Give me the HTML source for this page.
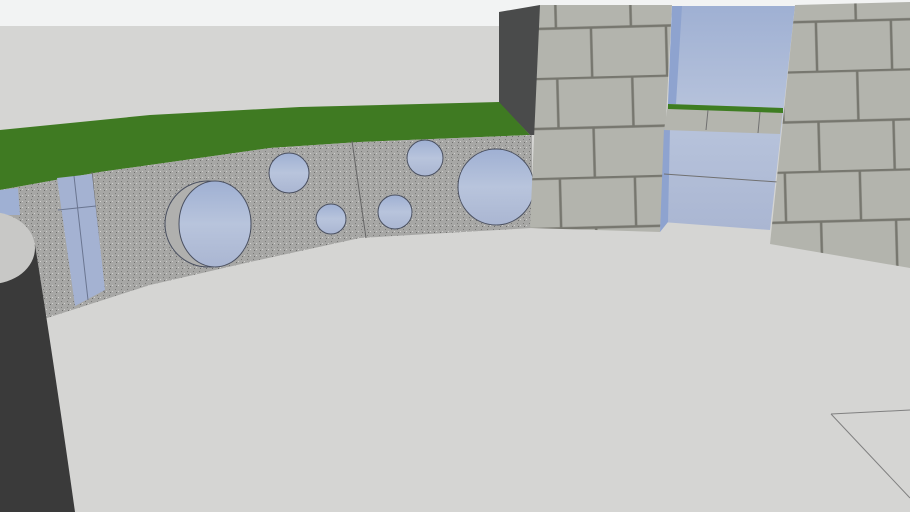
<!DOCTYPE html>
<html><head><meta charset="utf-8"><style>html,body{margin:0;padding:0;width:910px;height:512px;overflow:hidden;background:#d3d3d1}</style></head>
<body>
<svg width="910" height="512" viewBox="0 0 910 512" xmlns="http://www.w3.org/2000/svg">
<defs>
<linearGradient id="glass" x1="0" y1="0" x2="0" y2="1">
<stop offset="0" stop-color="#9fb0d3"/><stop offset="0.5" stop-color="#b8c4dc"/><stop offset="1" stop-color="#aab6d2"/>
</linearGradient>
<pattern id="blocks" x="0" y="-8" width="150" height="100" patternUnits="userSpaceOnUse" patternTransform="rotate(-1.5)">
<rect width="150" height="100" fill="#b3b4ad"/>
<path d="M0 1H150M0 51H150M30 0V51M105 0V51M65 51V100M140 51V100" stroke="#77776f" stroke-width="2.5" fill="none"/>
</pattern>
<pattern id="speck" width="6" height="6" patternUnits="userSpaceOnUse">
<rect width="6" height="6" fill="#a7a7a5"/>
<rect x="1" y="1" width="1" height="1" fill="#7a7a78"/>
<rect x="4" y="3" width="1" height="1" fill="#cfcfcd"/>
<rect x="2" y="4" width="1" height="1" fill="#6f6f6d"/>
</pattern>
</defs>
<rect x="0" y="0" width="910" height="26" fill="#f2f3f3"/>
<rect x="0" y="26" width="910" height="486" fill="#d5d5d3"/>
<!-- dark block -->
<polygon points="499,12 540,5 540,135 530,135 499,103" fill="#4a4b4b"/>
<!-- grass -->
<polygon points="0,130 150,115 300,107 499,102 530,135 360,142 270,148 100,172 0,190" fill="#3f7a22"/>
<!-- granite wall -->
<polygon points="0,190 100,172 270,148 360,142 532,135 532,228 360,238 250,262 150,285 47,318 0,330" fill="url(#speck)"/>
<path d="M352,141 L366,238 M92,172 L104,292" stroke="#666" stroke-width="1"/>
<!-- blue strips -->
<polygon points="57,178 92,174 105,290 75,306" fill="#a4b2d2"/>
<path d="M74,176 L88,300 M58,210 L96,206" stroke="#6a7590" stroke-width="1"/>
<polygon points="0,190 18,188 20,215 0,215" fill="#9fb0d3"/>
<!-- circles -->
<g stroke="#4a5060" stroke-width="1">
<ellipse cx="208" cy="224" rx="43" ry="43" fill="#b0b0ae"/>
<ellipse cx="215" cy="224" rx="36" ry="43" fill="url(#glass)"/>
<circle cx="289" cy="173" r="20" fill="url(#glass)"/>
<circle cx="331" cy="219" r="15" fill="url(#glass)"/>
<circle cx="425" cy="158" r="18" fill="url(#glass)"/>
<circle cx="395" cy="212" r="17" fill="url(#glass)"/>
<circle cx="496" cy="187" r="38" fill="url(#glass)"/>
</g>
<!-- block wall 1 -->
<polygon points="540,5 672,5 660,232 530,228" fill="url(#blocks)"/>
<!-- opening -->
<polygon points="672,6 795,6 770,230 662,222 668,104" fill="url(#glass)"/>
<polygon points="672,6 682,6 676,104 668,104" fill="#8ea3cf"/>
<polygon points="664,128 670,128 668,222 660,232" fill="#8ea3cf"/>
<polygon points="668,104 783,108 780,134 664,130" fill="#b4b5ae"/>
<polygon points="668,104 783,108 783,113 668,109" fill="#3e7d22"/>
<path d="M708,110 L706,130 M760,112 L758,133 M664,174 L778,182" stroke="#707070" stroke-width="1"/>
<!-- right block wall -->
<polygon points="795,5 910,2 910,268 770,244" fill="url(#blocks)"/>
<!-- dark cylinder -->
<path d="M0,230 L35,245 Q55,370 75,512 L0,512 Z" fill="#3a3a3a"/>
<ellipse cx="-10" cy="248" rx="45" ry="36" fill="#c8c8c6"/>
<!-- floor lines -->
<path d="M831,414 L910,410 M831,414 L910,498" stroke="#808080" stroke-width="1" fill="none"/>
</svg>
</body></html>
